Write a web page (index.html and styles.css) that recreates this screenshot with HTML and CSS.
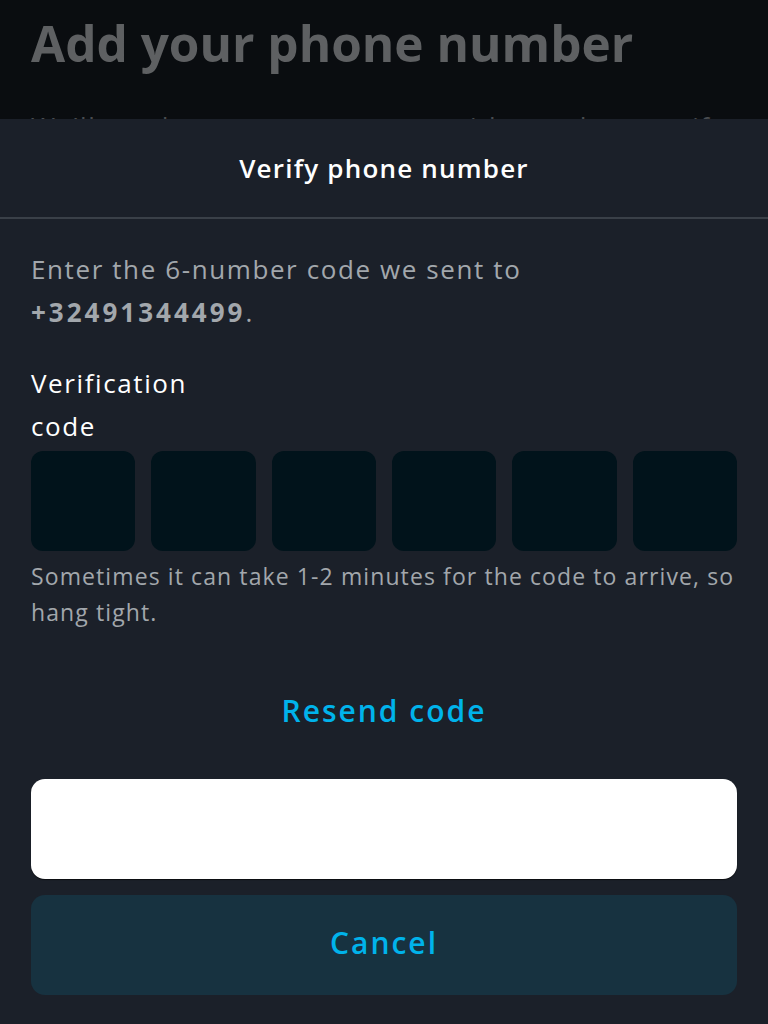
FILE: index.html
```html
<!DOCTYPE html>
<html lang="en">
<head>
    <meta charset="UTF-8">
    <meta name="viewport" content="width=device-width, initial-scale=1.0">
    <title>Verify phone number</title>
    <link rel="stylesheet" href="styles.css">
</head>
<body>
    <div class="page">
        <h1 class="page-title">Add your phone number</h1>
        <p class="page-text">We'll send you a text message with a code to verify your number.</p>
    </div>

    <div class="sheet">
        <div class="sheet-header">Verify phone number</div>
        <div class="sheet-body">
            <p class="intro">Enter the 6-number code we sent to <strong>+32491344499</strong>.</p>

            <label class="code-label">Verification code</label>
            <div class="code-inputs">
                <input class="code-box" type="text" maxlength="1">
                <input class="code-box" type="text" maxlength="1">
                <input class="code-box" type="text" maxlength="1">
                <input class="code-box" type="text" maxlength="1">
                <input class="code-box" type="text" maxlength="1">
                <input class="code-box" type="text" maxlength="1">
            </div>
            <p class="hint">Sometimes it can take 1-2 minutes for the code to arrive, so hang tight.</p>

            <button class="link-button">Resend code</button>

            <div class="actions">
                <button class="btn btn-primary"></button>
                <button class="btn btn-secondary">Cancel</button>
            </div>
        </div>
    </div>
</body>
</html>
```

FILE: styles.css
```css
body {
    margin: 0;
    height: 1024px;
    overflow: hidden;
    background-color: #1b2029;
    font-family: "Open Sans", "Noto Sans", sans-serif;
}
.page {
    height: 119px;
    overflow: hidden;
    box-sizing: border-box;
    padding: 10px 31px 0;
    background-color: #0a0d10;
}
.page-title {
    margin: 0;
    font-size: 49.5px;
    font-weight: 700;
    line-height: 66px;
    color: #5e6062;
}
.page-text {
    margin: 30px 0 0;
    font-size: 26px;
    line-height: 40px;
    letter-spacing: 1.6px;
    color: #4a4d50;
}
.sheet {
    background-color: #1b2029;
}
.sheet-header {
    height: 98px;
    display: flex;
    align-items: center;
    justify-content: center;
    border-bottom: 2px solid #3a4048;
    color: #ffffff;
    font-size: 26px;
    font-weight: 600;
    letter-spacing: 1.2px;
}
.sheet-body {
    padding: 29px 31px 0;
}
.intro {
    margin: 0;
    font-size: 26px;
    line-height: 43px;
    letter-spacing: 1.6px;
    color: #a2a7ac;
}
.intro strong {
    font-weight: 700;
    letter-spacing: 3px;
}
.code-label {
    display: block;
    width: 200px;
    margin-top: 28px;
    font-size: 26px;
    line-height: 43px;
    letter-spacing: 1.6px;
    color: #ffffff;
}
.code-inputs {
    display: grid;
    grid-template-columns: repeat(6, 1fr);
    gap: 16px;
    margin-top: 3px;
}
.code-box {
    height: 100px;
    min-width: 0;
    box-sizing: border-box;
    border: none;
    border-radius: 12px;
    background-color: #01131b;
    color: #ffffff;
    font-size: 32px;
    text-align: center;
    outline: none;
}
.hint {
    margin: 7px 0 0;
    font-size: 23px;
    line-height: 36px;
    letter-spacing: 1.1px;
    color: #a2a7ac;
}
.link-button {
    display: block;
    margin: 61px auto 0;
    padding: 0;
    border: none;
    background: none;
    color: #00b3eb;
    font-family: inherit;
    font-size: 30px;
    font-weight: 600;
    line-height: 40px;
    letter-spacing: 2px;
}
.actions {
    display: flex;
    flex-direction: column;
    gap: 16px;
    margin-top: 48px;
}
.btn {
    height: 100px;
    border: none;
    border-radius: 14px;
    font-family: inherit;
    font-size: 30px;
    font-weight: 600;
    letter-spacing: 2px;
}
.btn-primary {
    background-color: #ffffff;
    box-shadow: 0 1px 1px rgba(0, 0, 0, 0.6);
}
.btn-secondary {
    padding-bottom: 6px;
    background-color: #173240;
    color: #00b3eb;
}
```
